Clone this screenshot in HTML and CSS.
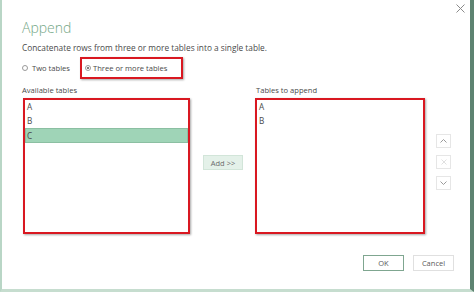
FILE: index.html
```html
<!DOCTYPE html>
<html>
<head>
<meta charset="utf-8">
<link rel="stylesheet" href="styles.css">
</head>
<body>
<div class="dialog">
  <svg class="close" width="9" height="9" viewBox="0 0 9 9"><path d="M0.5 0.5 L8.5 8.5 M8.5 0.5 L0.5 8.5" stroke="#8a8a8a" stroke-width="1" fill="none"/></svg>
  <h1 class="title">Append</h1>
  <p class="desc">Concatenate rows from three or more tables into a single table.</p>
  <div class="radios">
    <label class="radio"><span class="dot"></span>Two tables</label>
    <label class="radio mark"><span class="dot on"></span>Three or more tables</label>
  </div>
  <div class="lists">
    <div class="col left">
      <div class="label">Available tables</div>
      <div class="box">
        <div class="item">A</div>
        <div class="item">B</div>
        <div class="item sel">C</div>
      </div>
    </div>
    <div class="mid">
      <button class="add">Add &gt;&gt;</button>
    </div>
    <div class="col right">
      <div class="label">Tables to append</div>
      <div class="box">
        <div class="item">A</div>
        <div class="item">B</div>
      </div>
    </div>
    <div class="side">
      <button class="sbtn"><svg width="7" height="4" viewBox="0 0 7 4"><path d="M0.5 3.5 L3.5 0.5 L6.5 3.5" stroke="#9a9a9a" fill="none"/></svg></button>
      <button class="sbtn"><svg width="6" height="6" viewBox="0 0 6 6"><path d="M0.5 0.5 L5.5 5.5 M5.5 0.5 L0.5 5.5" stroke="#e0e0e0" fill="none"/></svg></button>
      <button class="sbtn"><svg width="7" height="4" viewBox="0 0 7 4"><path d="M0.5 0.5 L3.5 3.5 L6.5 0.5" stroke="#9a9a9a" fill="none"/></svg></button>
    </div>
  </div>
  <div class="footer">
    <button class="btn ok">OK</button>
    <button class="btn">Cancel</button>
  </div>
</div>
</body>
</html>
```
FILE: styles.css
```css
* { box-sizing: border-box; }
html, body { margin: 0; padding: 0; background: #fff; }
body { width: 474px; height: 292px; overflow: hidden; font-family: "Open Sans", "Noto Sans", sans-serif; color: #454545; }
.dialog {
  position: relative;
  width: 474px; height: 292px;
  background: #fff;
  border-left: 2px solid #b9d6c6;
  border-right: 4px solid #5d8371;
  border-bottom: 3px solid #c6ddcf;
  padding: 15px 0 0 20px;
}
.close { position: absolute; top: 4px; right: 5px; }
.title { margin: 0; font-size: 14px; font-weight: 300; line-height: 25px; color: #74a786; }
.desc { margin: 0; font-size: 8.3px; line-height: 16px; color: #4a4a4a; }
.radios { display: flex; align-items: center; height: 22px; margin-top: 1px; }
.radio { display: flex; align-items: center; font-size: 7.6px; color: #4a4a4a; }
.radio .dot { width: 6px; height: 6px; border: 1px solid #9a9a9a; border-radius: 50%; margin-right: 4px; position: relative; }
.radio .dot.on::after { content: ""; position: absolute; left: 1px; top: 1px; width: 2px; height: 2px; border-radius: 50%; background: #555; }
.radio.mark { margin-left: 10px; height: 22px; width: 103px; border: 2px solid #d91821; box-shadow: 1px 1px 2px rgba(0,0,0,0.35); padding-left: 3px; }
.radio.mark .dot { margin-right: 2px; }
.lists { display: flex; margin-top: 4px; }
.col, .mid, .side { flex: none; }
.label { font-size: 7.6px; line-height: 15px; color: #4a4a4a; }
.right .label { margin-left: 1px; }
.box { height: 136px; border: 2px solid #d91821; box-shadow: 1px 1px 2px rgba(0,0,0,0.35); padding: 0; }
.left .box { width: 167px; margin-left: 1px; }
.right .box { width: 170px; }
.item { height: 14px; line-height: 14px; font-size: 8.2px; padding-left: 2px; color: #4a4a4a; }
.item.sel { background: #9fd4b7; border: 1px solid #8bbfa2; height: 15px; line-height: 13px; padding-left: 1px; }
.mid { width: 65px; display: flex; align-items: flex-start; padding-top: 72px; padding-left: 13px; }
.add { width: 40px; height: 15px; padding: 0; font-family: inherit; font-size: 7.5px; color: #6a6a6a; background: #e4f1e9; border: 1px solid #d2e5d9; }
.side { display: flex; flex-direction: column; gap: 7px; margin-left: 11px; padding-top: 51px; }
.sbtn { width: 15px; height: 14px; padding: 0; background: #fff; border: 1px solid #e6e6e6; display: flex; align-items: center; justify-content: center; }
.footer { display: flex; justify-content: flex-end; gap: 9px; margin-top: 21px; padding-right: 16px; }
.btn { width: 41px; height: 16px; padding: 0; font-family: inherit; font-size: 7.5px; color: #5a5a5a; background: #fff; border: 1px solid #e0e0e0; }
.btn.ok { border-color: #7fa690; }
```
